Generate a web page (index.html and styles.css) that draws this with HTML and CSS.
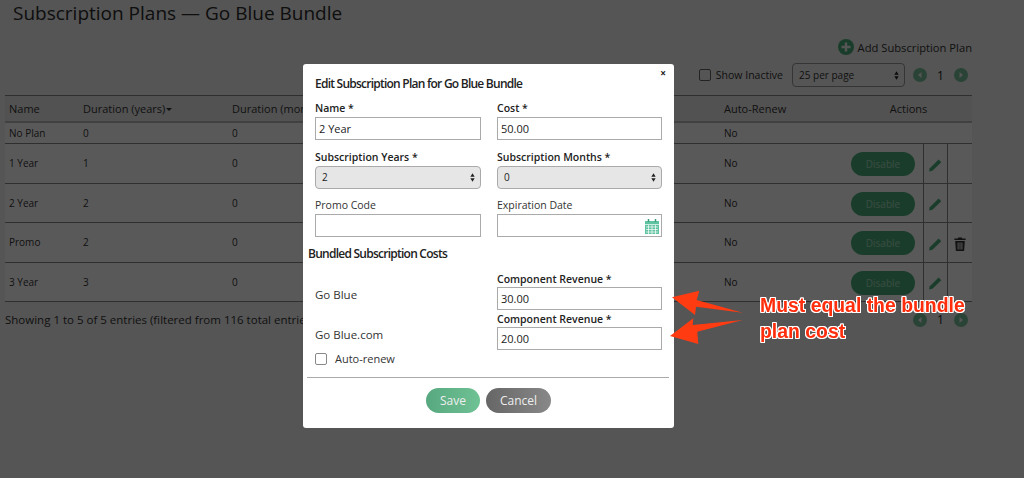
FILE: index.html
```html
<!DOCTYPE html>
<html lang="en">
<head>
<meta charset="utf-8">
<title>Subscription Plans</title>
<link rel="stylesheet" href="styles.css">
</head>
<body>
<main class="page">
  <h1 class="title">Subscription Plans — Go Blue Bundle</h1>
  <div class="add-row">
    <svg class="add-icon" viewBox="0 0 16 16"><circle cx="8" cy="8" r="8" fill="#4caf7d"/><path d="M8 3.500v9M3.500 8h9" stroke="#f2f2f2" stroke-width="2.400"/></svg>
    <span>Add Subscription Plan</span>
  </div>
  <div class="tools">
    <span class="check page-check"></span>
    <span class="show-label">Show Inactive</span>
    <div class="per-page">25 per page
      <svg class="updown" viewBox="0 0 6 10"><path d="M3 0l2.600 4H.4zM3 10L.4 6h5.200z" fill="#222"/></svg>
    </div>
    <div class="pager">
      <span class="pg"><svg viewBox="0 0 14 14"><path d="M8.500 4v6L5 7z" fill="#f2f2f2"/></svg></span>
      <span class="pg-num">1</span>
      <span class="pg"><svg viewBox="0 0 14 14"><path d="M5.500 4v6L9 7z" fill="#f2f2f2"/></svg></span>
    </div>
  </div>
  <table class="plans">
    <colgroup>
      <col class="c-name"><col class="c-years"><col class="c-months"><col class="c-auto"><col class="c-dis"><col class="c-edit"><col class="c-del">
    </colgroup>
    <thead>
      <tr><th>Name</th><th>Duration (years)<span class="sort"></span></th><th>Duration (months)</th><th>Auto-Renew</th><th colspan="3" class="center">Actions</th></tr>
    </thead>
    <tbody>
      <tr class="short"><td>No Plan</td><td>0</td><td>0</td><td>No</td><td colspan="3"></td></tr>
      <tr><td>1 Year</td><td>1</td><td>0</td><td>No</td><td class="center"><span class="disable">Disable</span></td><td class="ic"><svg class="pencil" viewBox="0 0 14 13"><path d="M1 12.500l.8-3.300L10.600.6l2.700 2.600-8.900 8.500z" fill="#4caf7d"/></svg></td><td class="ic"></td></tr>
      <tr><td>2 Year</td><td>2</td><td>0</td><td>No</td><td class="center"><span class="disable">Disable</span></td><td class="ic"><svg class="pencil" viewBox="0 0 14 13"><path d="M1 12.500l.8-3.300L10.600.6l2.700 2.600-8.900 8.500z" fill="#4caf7d"/></svg></td><td class="ic"></td></tr>
      <tr><td>Promo</td><td>2</td><td>0</td><td>No</td><td class="center"><span class="disable">Disable</span></td><td class="ic"><svg class="pencil" viewBox="0 0 14 13"><path d="M1 12.500l.8-3.300L10.600.6l2.700 2.600-8.900 8.500z" fill="#4caf7d"/></svg></td><td class="ic"><svg class="trash" viewBox="0 0 12 14"><path d="M4 1.500V.5h4v1h3.600v1.600H.4V1.500zM1.200 4h9.600l-.7 10H1.900zM3.600 5.500v7h1v-7zM5.500 5.500v7h1v-7zM7.400 5.500v7h1v-7z" fill="#333" fill-rule="evenodd"/></svg></td></tr>
      <tr><td>3 Year</td><td>3</td><td>0</td><td>No</td><td class="center"><span class="disable">Disable</span></td><td class="ic"><svg class="pencil" viewBox="0 0 14 13"><path d="M1 12.500l.8-3.300L10.600.6l2.700 2.600-8.900 8.500z" fill="#4caf7d"/></svg></td><td class="ic"></td></tr>
    </tbody>
  </table>
  <div class="table-foot">
    <span>Showing 1 to 5 of 5 entries (filtered from 116 total entries)</span>
    <div class="pager">
      <span class="pg"><svg viewBox="0 0 14 14"><path d="M8.500 4v6L5 7z" fill="#f2f2f2"/></svg></span>
      <span class="pg-num">1</span>
      <span class="pg"><svg viewBox="0 0 14 14"><path d="M5.500 4v6L9 7z" fill="#f2f2f2"/></svg></span>
    </div>
  </div>
</main>

<div class="scrim"></div>

<section class="modal">
  <span class="close">×</span>
  <h2 class="modal-title">Edit Subscription Plan for Go Blue Bundle</h2>
  <div class="form-grid">
    <div class="field"><label class="req">Name *</label><div class="input">2 Year</div></div>
    <div class="field"><label class="req">Cost *</label><div class="input">50.00</div></div>
    <div class="field"><label class="req">Subscription Years *</label><div class="select">2<svg class="updown" viewBox="0 0 6 10"><path d="M3 0l2.600 4H.4zM3 10L.4 6h5.200z" fill="#222"/></svg></div></div>
    <div class="field"><label class="req">Subscription Months *</label><div class="select">0<svg class="updown" viewBox="0 0 6 10"><path d="M3 0l2.600 4H.4zM3 10L.4 6h5.200z" fill="#222"/></svg></div></div>
    <div class="field"><label>Promo Code</label><div class="input"></div></div>
    <div class="field"><label>Expiration Date</label><div class="input date">
      <svg class="cal" viewBox="0 0 14 15"><rect y="2" width="14" height="13" fill="#5fc2a0"/><path d="M3.500 0v3M10.500 0v3" stroke="#3f9c7e" stroke-width="1.500"/><path d="M0 5.500h14M1 8h12M1 10.500h12M1 13h12M3.500 6v9M7 6v9M10.500 6v9" stroke="#fff" stroke-width=".7"/></svg>
    </div></div>
  </div>
  <h3 class="bundle-title">Bundled Subscription Costs</h3>
  <div class="bundle-rows">
    <div class="bundle-row"><span class="bundle-name">Go Blue</span><div class="field"><label class="req">Component Revenue *</label><div class="input">30.00</div></div></div>
    <div class="bundle-row"><span class="bundle-name">Go Blue.com</span><div class="field"><label class="req">Component Revenue *</label><div class="input">20.00</div></div></div>
  </div>
  <div class="renew"><span class="check"></span><span>Auto-renew</span></div>
  <hr class="rule">
  <div class="actions"><button class="btn save">Save</button><button class="btn cancel">Cancel</button></div>
</section>

<svg class="arrows" viewBox="0 0 90 60">
  <path d="M2 7.300L29.300.7 26.700 10 72.700 22.700 26 16.700 25 25z" fill="#ff3b12"/>
  <path d="M0 46L23.300 28.300 22.700 35 72.700 30 27.300 41.700 28.300 54z" fill="#ff3b12"/>
</svg>
<p class="note">Must equal the bundle<br>plan cost</p>
</body>
</html>
```

FILE: styles.css
```css
* { box-sizing: border-box; }
html, body { margin: 0; height: 100%; overflow: hidden; }
body { background: #f2f2f2; font-family: "Open Sans", sans-serif; color: #333; font-size: 11px; }

.page { padding: 0 52px 0 5px; }
.title { margin: 0; padding: 0 0 0 8px; height: 28px; font-size: 19px; font-weight: 400; line-height: 26px; color: #2c2c2c; }

.add-row { display: flex; justify-content: flex-end; align-items: center; gap: 4px; margin-top: 11px; height: 16px; font-size: 11.200px; white-space: nowrap; }
.add-icon { width: 16px; height: 16px; }

.tools { display: flex; justify-content: flex-end; align-items: center; height: 24px; margin-top: 8px; }
.check { width: 12px; height: 12px; border: 1px solid #888; border-radius: 2px; background: #fff; flex: none; display: block; }
.page-check { background: transparent; border-color: #666; }
.show-label { margin: 0 9px 0 5px; font-size: 10.500px; }
.per-page { position: relative; width: 113px; height: 24px; border: 1px solid #999; border-radius: 4px; padding-left: 6px; line-height: 22px; font-size: 10px; }
.updown { position: absolute; right: 5px; top: 50%; width: 5px; height: 9px; margin-top: -4px; }
.pager { display: flex; align-items: center; width: 55px; margin-left: 8px; margin-right: 4px; flex: none; }
.pg { width: 14px; height: 14px; border-radius: 50%; background: #77c29c; display: block; flex: none; }
.pg svg { display: block; width: 14px; height: 14px; }
.pg-num { width: 27px; text-align: center; font-size: 12px; color: #222; }

.plans { width: 967px; margin-top: 8px; border-collapse: collapse; table-layout: fixed; background: #fff; }
.c-name { width: 74px; } .c-years { width: 149px; } .c-months { width: 492px; } .c-auto { width: 125px; }
.c-dis { width: 78px; } .c-edit { width: 24px; } .c-del { width: 25px; }
.plans th { height: 26px; padding: 0 4px; font-size: 11px; font-weight: 400; text-align: left; background: #ececec; border-top: 1px solid #888; border-bottom: 2px solid #bbb; white-space: nowrap; overflow: hidden; }
.plans td { height: 39.500px; padding: 0 4px; font-size: 10px; border-bottom: 1px solid #888; }
.plans .short td { height: 22px; }
.plans .center { text-align: center; }
.plans td.center { padding: 2px 8px 0 6px; }
.plans td.ic { padding: 4px 0 0; text-align: center; border-left: 1px solid #888; }
.sort { display: inline-block; margin-left: 1px; vertical-align: middle; border: 3px solid transparent; border-top: 3px solid #333; border-bottom-width: 0; }
.disable { display: inline-block; width: 64px; height: 24px; line-height: 24px; border-radius: 12px; background: #4caf7d; color: #a6d9bf; font-size: 10px; text-align: center; vertical-align: middle; }
.pencil { display: block; width: 14px; height: 13px; margin: 0 auto; }
.trash { display: block; width: 12px; height: 14px; margin: 0 auto; }

.table-foot { display: flex; justify-content: space-between; align-items: center; height: 35px; margin-top: 0; font-size: 11.500px; white-space: nowrap; position: relative; overflow: hidden; }
.table-foot .pager { margin-right: 4px; }

.scrim { position: fixed; inset: 0; background: rgba(0, 0, 0, .65); }

.modal { position: absolute; left: 303px; top: 64px; width: 371px; height: 364px; padding: 0 12px; background: #fff; border-radius: 3px; color: #222; }
.close { position: absolute; top: 2px; right: 8px; font-size: 10px; font-weight: 700; line-height: 14px; }
.modal-title { margin: 0; padding-top: 11px; font-size: 12px; line-height: 18px; font-weight: 600; letter-spacing: -.76px; }
.form-grid { display: grid; grid-template-columns: 166px 165px; column-gap: 16px; row-gap: 6.500px; margin-top: 5px; }
.field { display: flex; flex-direction: column; }
.field label { font-size: 10.500px; line-height: 20px; height: 19px; color: #333; }
.field label.req { font-weight: 600; color: #222; }
.input { position: relative; height: 23px; border: 1px solid #aaa; line-height: 22px; padding-left: 3px; font-size: 11px; color: #222; background: #fff; }
.select { position: relative; height: 23px; border: 1px solid #aaa; border-radius: 4px; background: #e6e6e6; padding-left: 6px; line-height: 21px; font-size: 10px; }
.cal { position: absolute; right: 2px; top: 4px; width: 14px; height: 15px; }

.bundle-title { margin: 8px 0 0 -7px; font-size: 12px; line-height: 18px; font-weight: 600; letter-spacing: -.75px; }
.bundle-rows { margin-top: 5px; display: flex; flex-direction: column; gap: 0; }
.bundle-row { display: grid; grid-template-columns: 166px 165px; column-gap: 16px; align-items: end; height: 40px; }
.bundle-row .field label { height: 16px; line-height: 16px; margin-top: 1px; }
.bundle-row:first-child { height: 42px; }
.bundle-name { font-size: 11.500px; line-height: 16px; padding-bottom: 7px; color: #333; }

.renew { display: flex; align-items: center; gap: 8px; margin-top: 1px; font-size: 11px; color: #333; }
.rule { margin: 11px -7px 0 -8px; border: 0; border-top: 1px solid #aaa; }
.actions { display: flex; justify-content: center; gap: 6px; margin-top: 10px; }
.btn { height: 25px; border: 0; border-radius: 13px; color: #eee; font: 12px "Open Sans", sans-serif; padding: 0; }
.save { width: 54px; background: linear-gradient(90deg, #57a87f, #6fc294); }
.cancel { width: 65px; background: linear-gradient(90deg, #666, #888); }

.arrows { position: absolute; left: 670px; top: 290px; width: 90px; height: 60px; }
.note { position: absolute; left: 760px; top: 292px; margin: 0; font: 700 19.400px/26px "Liberation Sans", sans-serif; color: #ff2d0c; text-shadow: -1px 0 #fff, 1px 0 #fff, 0 -1px #fff, 0 1px #fff, 1px 1px #fff, -1px -1px #fff, 1px -1px #fff, -1px 1px #fff; white-space: nowrap; }
```
